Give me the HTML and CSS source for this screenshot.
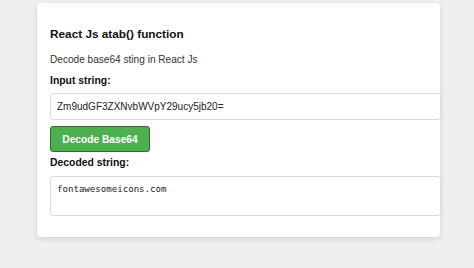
FILE: index.html
```html
<!DOCTYPE html>
<html lang="en">
<head>
  <meta charset="UTF-8">
  <meta name="viewport" content="width=device-width, initial-scale=1.0">
  <title>React Js atab() function</title>
  <link rel="stylesheet" href="styles.css">
</head>
<body>
  <div class="page">
    <div class="card">
      <h2 class="title">React Js atab() function</h2>
      <p class="subtitle">Decode base64 sting in React Js</p>

      <label class="field-label" for="inputString">Input string:</label>
      <input class="text-input" id="inputString" type="text" value="Zm9udGF3ZXNvbWVpY29ucy5jb20=">

      <button class="button">Decode Base64</button>

      <label class="field-label decoded-label" for="decodedString">Decoded string:</label>
      <textarea class="text-output" id="decodedString" readonly>fontawesomeicons.com</textarea>
    </div>
  </div>
</body>
</html>
```

FILE: styles.css
```css
* {
  margin: 0;
  padding: 0;
  box-sizing: border-box;
}

body {
  background: #efefef;
  font-family: 'Liberation Sans', Arial, sans-serif;
  color: #222;
  height: 268px;
  overflow: hidden;
}

.page {
  padding: 3px 0 0 37px;
  height: 265px;
  border-bottom: 3px solid #f7f7f7;
  box-sizing: content-box;
}

.card {
  width: 403px;
  height: 234px;
  background: white;
  border-radius: 4px;
  box-shadow: 0 2px 6px rgba(0,0,0,0.12);
  padding: 24px 0 0 13px;
  display: flex;
  flex-direction: column;
  align-items: flex-start;
}

.title {
  font-size: 11.8px;
  line-height: 15px;
  font-weight: bold;
  color: #111;
}

.subtitle {
  font-size: 10.1px;
  line-height: 13px;
  margin-top: 11px;
  color: #333;
}

.field-label {
  font-size: 10.4px;
  line-height: 13px;
  font-weight: bold;
  margin-top: 8px;
  color: #111;
}

.decoded-label {
  margin-top: 4px;
}

.text-input {
  margin-top: 6px;
  width: 391px;
  height: 27px;
  border: 1px solid #dcdcdc;
  border-radius: 3px;
  padding: 0 6px;
  font-family: 'Liberation Sans', Arial, sans-serif;
  font-size: 10px;
  color: #222;
  background: white;
  outline: none;
}

.button {
  margin-top: 6px;
  width: 100px;
  height: 26px;
  background: #4caf50;
  color: white;
  border: 1px solid #2f6b31;
  border-radius: 3px;
  font-family: 'Liberation Sans', Arial, sans-serif;
  font-size: 10.2px;
  font-weight: bold;
  cursor: pointer;
}

.text-output {
  margin-top: 7px;
  width: 391px;
  height: 40px;
  border: 1px solid #dcdcdc;
  border-radius: 3px;
  padding: 6px 6px;
  font-family: 'DejaVu Sans Mono', monospace;
  font-size: 9.1px;
  line-height: 12px;
  color: #222;
  resize: none;
  outline: none;
}
```
